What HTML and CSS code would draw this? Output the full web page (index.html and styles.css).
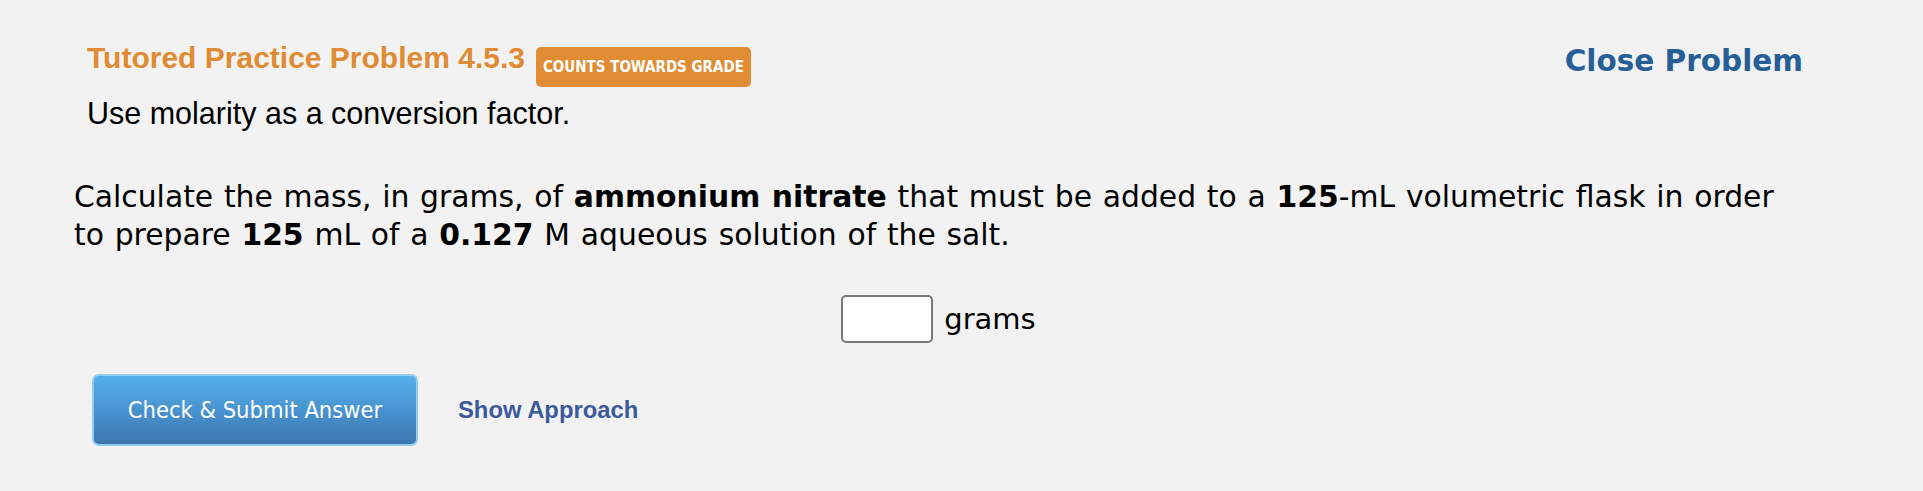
FILE: index.html
```html
<!DOCTYPE html>
<html lang="en">
<head>
<meta charset="utf-8">
<title>Tutored Practice Problem 4.5.3</title>
<link rel="stylesheet" href="styles.css">
</head>
<body>
<div class="page">
  <header class="head">
    <div class="title-group">
      <h1 class="title">Tutored Practice Problem 4.5.3</h1>
      <span class="badge">COUNTS TOWARDS GRADE</span>
    </div>
    <a class="close" href="#">Close Problem</a>
  </header>
  <p class="sub">Use molarity as a conversion factor.</p>
  <p class="question">Calculate the mass, in grams, of <b>ammonium nitrate</b> that must be added to a <b>125</b>-mL volumetric flask in order to prepare <b>125</b> mL of a <b>0.127</b> M aqueous solution of the salt.</p>
  <div class="answer">
    <input class="answer-input" type="text" aria-label="mass in grams">
    <span class="unit">grams</span>
  </div>
  <div class="actions">
    <button class="submit" type="button">Check &amp; Submit Answer</button>
    <a class="approach" href="#">Show Approach</a>
  </div>
</div>
</body>
</html>
```
FILE: styles.css
```css
html, body {
  margin: 0;
  padding: 0;
  background: #f2f2f2;
}

.page {
  padding: 41px 120px 0 74px;
}

.head {
  display: flex;
  justify-content: space-between;
  align-items: flex-start;
  padding-left: 13px;
}

.title-group {
  display: flex;
  align-items: flex-start;
}

.title {
  margin: 0;
  font-family: "Liberation Sans", Arial, sans-serif;
  font-weight: bold;
  font-size: 30px;
  line-height: 34px;
  color: #e08b32;
}

.badge {
  margin: 6px 0 0 11px;
  height: 40px;
  box-sizing: border-box;
  padding: 0 7px;
  display: flex;
  align-items: center;
  background: #df8c33;
  border-radius: 5px;
  color: #fff;
  font-family: "DejaVu Sans Condensed", "DejaVu Sans", sans-serif;
  font-stretch: condensed;
  font-weight: bold;
  font-size: 15px;
}

.close {
  margin-top: 3px;
  font-family: "DejaVu Sans", Verdana, sans-serif;
  font-weight: bold;
  font-size: 29.5px;
  line-height: 34px;
  color: #265e96;
  text-decoration: none;
}

.sub {
  margin: 9px 0 0;
  padding-left: 13px;
  font-family: "Liberation Sans", Arial, sans-serif;
  font-size: 30.5px;
  line-height: 34px;
  color: #000;
}

.question {
  margin: 48px 0 0;
  font-family: "DejaVu Sans", Verdana, sans-serif;
  font-size: 29.8px;
  word-spacing: 1.3px;
  line-height: 38.3px;
  color: #000;
}

.answer {
  margin-top: 40px;
  display: flex;
  justify-content: center;
  align-items: center;
  gap: 11px;
}

.answer-input {
  width: 92px;
  height: 48px;
  box-sizing: border-box;
  margin: 0;
  border: 2px solid #777;
  border-radius: 5px;
  background: #fff;
  padding: 0 6px;
}

.unit {
  font-family: "DejaVu Sans", Verdana, sans-serif;
  font-size: 29px;
  color: #000;
}

.actions {
  margin-top: 31px;
  padding-left: 18px;
  display: flex;
  align-items: center;
  gap: 40px;
}

.submit {
  width: 326px;
  height: 72px;
  box-sizing: border-box;
  margin: 0;
  padding: 0;
  border: 2px solid #93ccef;
  border-radius: 7px;
  background: linear-gradient(to bottom, #55b0ea 0%, #4790cd 55%, #3a76ae 100%);
  color: #fff;
  font-family: "DejaVu Sans Condensed", "DejaVu Sans", sans-serif;
  font-stretch: condensed;
  font-size: 23.5px;
}

.approach {
  font-family: "Liberation Sans", Arial, sans-serif;
  font-weight: bold;
  font-size: 23.8px;
  color: #3b5a9a;
  text-decoration: none;
}
```
